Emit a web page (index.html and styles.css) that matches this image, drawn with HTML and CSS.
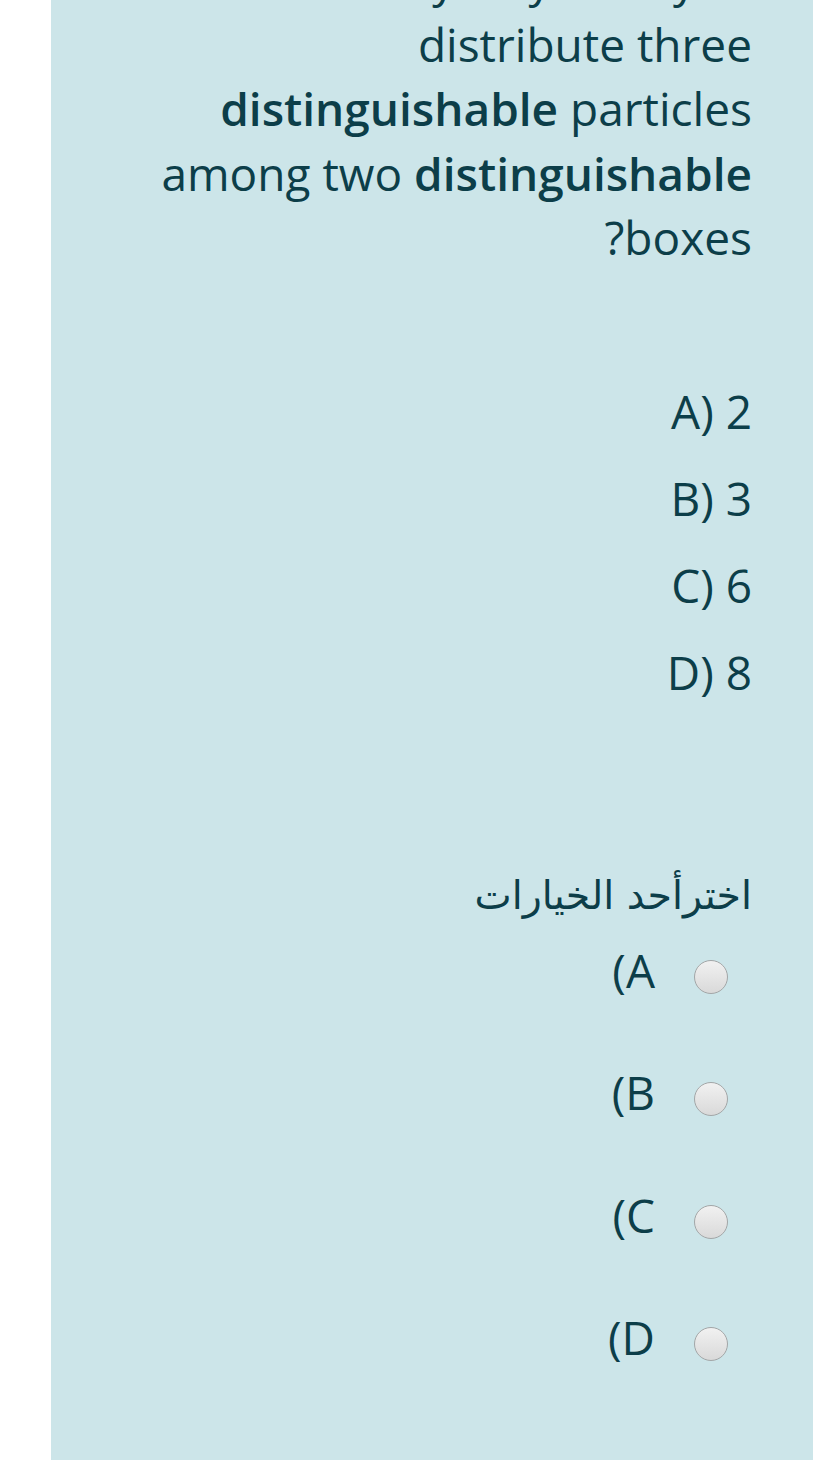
FILE: index.html
```html
<!DOCTYPE html>
<html lang="en">
<head>
<meta charset="utf-8">
<title>Question</title>
<link rel="stylesheet" href="styles.css">
</head>
<body>
<main class="panel" dir="rtl">
  <p class="question">In how many ways can you<br>distribute three<br><b>distinguishable</b> particles<br>among two <b>distinguishable</b><br>boxes?</p>
  <ul class="options">
    <li>A) 2</li>
    <li>B) 3</li>
    <li>C) 6</li>
    <li>D) 8</li>
  </ul>
  <p class="prompt">اخترأحد الخيارات</p>
  <div class="choices">
    <label class="choice"><input type="radio" name="ans" class="radio"><span class="choice-text">A)</span></label>
    <label class="choice"><input type="radio" name="ans" class="radio"><span class="choice-text">B)</span></label>
    <label class="choice"><input type="radio" name="ans" class="radio"><span class="choice-text">C)</span></label>
    <label class="choice"><input type="radio" name="ans" class="radio"><span class="choice-text">D)</span></label>
  </div>
</main>
</body>
</html>
```
FILE: styles.css
```css
html, body {
  margin: 0;
  padding: 0;
  background: #ffffff;
  height: 1460px;
  overflow: hidden;
}

.panel {
  display: block;
  margin-left: 51px;
  width: 762px;
  height: 1460px;
  box-sizing: border-box;
  padding-right: 61px;
  background: #cce5e9;
  color: #0c3e49;
  font-family: "Open Sans", "Liberation Sans", sans-serif;
  overflow: hidden;
}

.question {
  margin: -53px 0 0;
  font-size: 46px;
  font-weight: 400;
  line-height: 64.5px;
  text-align: right;
}

.question b {
  font-weight: 600;
}

.options {
  list-style: none;
  margin: 98px 0 0;
  padding: 0;
  font-size: 46px;
  line-height: 87px;
  text-align: right;
}

.prompt {
  margin: 154px 0 0;
  font-family: "DejaVu Sans", sans-serif;
  font-size: 39.5px;
  line-height: 50px;
  text-align: right;
}

.choices {
  display: flex;
  flex-direction: column;
  gap: 72.5px;
  margin-top: 32px;
}

.choice {
  display: flex;
  flex-direction: row;
  align-items: center;
  gap: 39px;
  height: 50px;
}

.radio {
  appearance: none;
  -webkit-appearance: none;
  margin: 0 24px 0 0;
  width: 34px;
  height: 34px;
  border-radius: 50%;
  border: 1.5px solid #a3a6a7;
  background: linear-gradient(#f1f1f1, #d9d9d9);
  box-sizing: border-box;
  flex: none;
}

.choice-text {
  font-size: 46px;
  line-height: 50px;
  margin-bottom: 14px;
}
```
